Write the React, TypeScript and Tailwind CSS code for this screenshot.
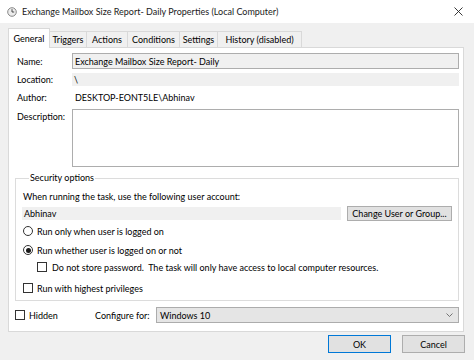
function ClockIcon() {
  return (
    <svg width="10" height="10" viewBox="0 0 10 10">
      <circle cx="5" cy="5" r="4.3" fill="#ececec" stroke="#7a7a7a" strokeWidth="0.9" />
      <path d="M5 2.2V5h2.2" fill="none" stroke="#3a3a3a" strokeWidth="0.9" />
    </svg>
  )
}

function Radio({ checked }: { checked?: boolean }) {
  return (
    <span className="flex h-[10px] w-[10px] shrink-0 items-center justify-center rounded-full border border-[#333] bg-white">
      {checked && <span className="h-[5px] w-[5px] rounded-full bg-[#1a1a1a]" />}
    </span>
  )
}

function Check() {
  return <span className="block h-[10px] w-[10px] shrink-0 border border-[#333] bg-white" />
}

const tabs = [
  { label: "Triggers", w: "w-[37px]" },
  { label: "Actions", w: "w-[41px]" },
  { label: "Conditions", w: "w-[52px]" },
  { label: "Settings", w: "w-[38px]" },
  { label: "History (disabled)", w: "w-[84px]" },
]

export default function App() {
  return (
    <div
      className="h-[360px] w-[474px] overflow-hidden whitespace-nowrap bg-[#f0f0f0] text-[9px] leading-none text-black"
      style={{ fontFamily: 'Lato, "Noto Sans", "Liberation Sans", sans-serif' }}
    >
      {/* title bar */}
      <div className="flex h-[23px] items-center bg-white pl-[7px] pr-[8px]">
        <ClockIcon />
        <span className="ml-[5px] flex-1 text-[#1a1a1a]">
          Exchange Mailbox Size Report- Daily Properties (Local Computer)
        </span>
        <svg width="9" height="9" viewBox="0 0 9 9" className="mr-[3px]">
          <path d="M0.5 0.5l8 8M8.5 0.5l-8 8" stroke="#222" strokeWidth="0.9" />
        </svg>
      </div>

      <div className="px-[8px] pt-[5px]">
        {/* tabs */}
        <div className="relative z-10 flex items-end">
          <div className="-mb-px flex h-[20px] w-[42px] items-center justify-center border border-b-0 border-[#d9d9d9] bg-white">
            General
          </div>
          {tabs.map((t) => (
            <div
              key={t.label}
              className={`flex h-[16px] ${t.w} items-center justify-center border border-b-0 border-l-0 border-[#d9d9d9] bg-[#f0f0f0]`}
            >
              {t.label}
            </div>
          ))}
        </div>

        {/* panel */}
        <div className="flex h-[285px] w-[456px] flex-col border border-[#d9d9d9] bg-white pl-[6px] pr-[4px] pt-[5px]">
          <div className="flex h-[16px] items-center">
            <span className="w-[57px] pl-[2px]">Name:</span>
            <div className="flex h-full flex-1 items-center border border-[#adadad] bg-[#f0f0f0] pl-[2px]">
              Exchange Mailbox Size Report- Daily
            </div>
          </div>
          <div className="mt-[4px] flex h-[13px] items-center">
            <span className="w-[57px] pl-[2px]">Location:</span>
            <div className="flex h-full flex-1 items-center bg-[#f0f0f0] pl-[2px]">\</div>
          </div>
          <div className="mt-[5px] flex h-[12px] items-center">
            <span className="w-[57px] pl-[2px]">Author:</span>
            <span className="pl-[3px]">DESKTOP-EONT5LE\Abhinav</span>
          </div>
          <div className="mt-[6px] flex h-[58px]">
            <span className="w-[57px] pl-[2px] pt-[3px]">Description:</span>
            <div className="flex-1 border border-[#adadad] bg-white" />
          </div>

          <fieldset className="mt-[5px] border border-[#dcdcdc] pb-[6px] pl-[7px] pr-[6px]">
            <legend className="ml-[6px] h-[12px] px-[1px] leading-[12px]">Security options</legend>
            <div className="mt-[6px] flex h-[12px] items-center">
              When running the task, use the following user account:
            </div>
            <div className="mt-[4px] flex h-[15px] items-center">
              <div className="-ml-px flex h-[13px] w-[319px] items-center bg-[#f0f0f0] pl-[2px]">Abhinav</div>
              <div className="ml-[6px] flex h-[15px] w-[105px] items-center justify-center border border-[#adadad] bg-[#e1e1e1]">
                Change User or Group...
              </div>
            </div>
            <div className="mt-[4px] flex h-[12px] items-center gap-[4px]">
              <Radio />
              <span>Run only when user is logged on</span>
            </div>
            <div className="mt-[7px] flex h-[12px] items-center gap-[4px]">
              <Radio checked />
              <span>Run whether user is logged on or not</span>
            </div>
            <div className="mt-[5px] flex h-[12px] items-center gap-[5px] pl-[14px]">
              <Check />
              <span>Do not store password.&nbsp; The task will only have access to local computer resources.</span>
            </div>
            <div className="mt-[9px] flex h-[12px] items-center gap-[4px]">
              <Check />
              <span>Run with highest privileges</span>
            </div>
          </fieldset>

          <div className="mt-[6px] flex h-[16px] items-center">
            <Check />
            <span className="ml-[4px] w-[66px]">Hidden</span>
            <span className="w-[61px]">Configure for:</span>
            <div className="flex h-full flex-1 items-center justify-between border border-[#acacac] bg-[#e5e5e5] pl-[3px] pr-[5px]">
              <span>Windows 10</span>
              <svg width="7" height="4" viewBox="0 0 7 4">
                <path d="M0.5 0.5L3.5 3.5L6.5 0.5" fill="none" stroke="#555" strokeWidth="0.8" />
              </svg>
            </div>
          </div>
        </div>

        {/* buttons */}
        <div className="mt-[3px] flex justify-end gap-[11px] pr-[1px]">
          <div className="flex h-[18px] w-[63px] items-center justify-center border border-[#0078d7] bg-[#e1e1e1]">
            OK
          </div>
          <div className="flex h-[18px] w-[63px] items-center justify-center border border-[#adadad] bg-[#e1e1e1]">
            Cancel
          </div>
        </div>
      </div>
    </div>
  )
}
